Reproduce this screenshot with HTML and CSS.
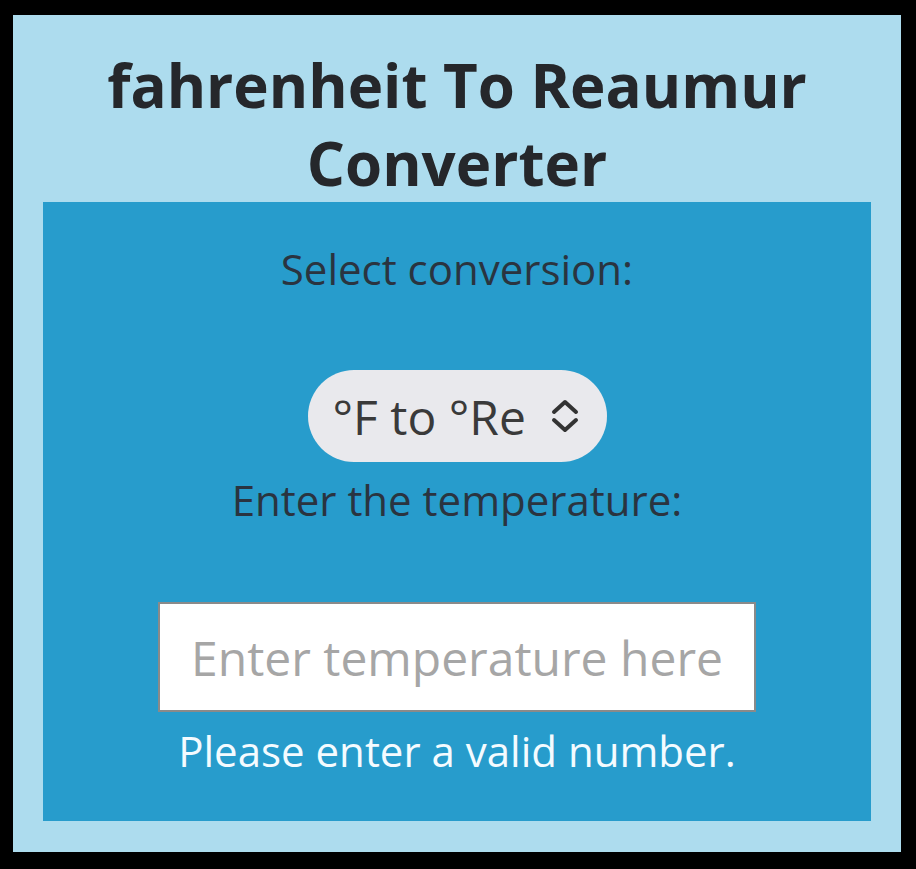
FILE: index.html
```html
<!DOCTYPE html>
<html>
	<head>
		<link rel="stylesheet" href="styles.css">
		<title>fahrenheit To Reaumur Converter</title>
	</head>
	<body>
		<div class="container">
			<h1 class="title">fahrenheit To Reaumur Converter</h1>
			<div class="converter">
				<label class="label" for="conversion">Select conversion:</label>
				<div class="select-wrap">
					<select id="conversion" class="select">
						<option>°F to °Re</option>
						<option>°Re to °F</option>
					</select>
					<svg class="select-arrows" width="32" height="36" viewBox="0 0 32 36">
						<path d="M5 14 L16 4 L27 14" fill="none" stroke="#333" stroke-width="4" stroke-linecap="round" stroke-linejoin="round"/>
						<path d="M5 22 L16 32 L27 22" fill="none" stroke="#333" stroke-width="4" stroke-linecap="round" stroke-linejoin="round"/>
					</svg>
				</div>
				<label class="label" for="temperature">Enter the temperature:</label>
				<input id="temperature" class="input" type="text" placeholder="Enter temperature here">
				<div class="error">Please enter a valid number.</div>
			</div>
		</div>
	</body>
</html>
```

FILE: styles.css
```css
body {
	margin: 0;
	background-color: #000;
	font-family: "Open Sans", "Noto Sans", sans-serif;
}
.container {
	margin: 15px 15px 0 13px;
	padding: 31px 30px 31px 30px;
	background-color: #addcee;
	text-align: center;
}
.title {
	margin: 0;
	font-size: 60px;
	line-height: 78px;
	font-weight: 700;
	color: #25272b;
}
.converter {
	display: flex;
	flex-direction: column;
	align-items: center;
	padding: 38px 20px 42px 20px;
	background-color: #279ccc;
}
.label {
	display: block;
	font-size: 42px;
	line-height: 57px;
	color: #2a3440;
}
.select-wrap {
	position: relative;
	margin: 73px 0 9px 0;
}
.select {
	display: block;
	appearance: none;
	-webkit-appearance: none;
	width: 299px;
	height: 92px;
	padding: 0 0 0 25px;
	border: none;
	border-radius: 46px;
	background-color: #e9e9ed;
	font-family: "Open Sans", sans-serif;
	font-size: 48px;
	color: #3a3a3a;
}
.select-arrows {
	position: absolute;
	right: 26px;
	top: 28px;
	pointer-events: none;
}
.input {
	display: block;
	box-sizing: border-box;
	width: 598px;
	height: 110px;
	margin: 74px 0 10px 0;
	padding: 0 20px;
	border: 2px solid #8a8a8a;
	background-color: #fff;
	font-family: "Open Sans", sans-serif;
	font-size: 48px;
	text-align: center;
}
.input::placeholder {
	color: #a6a6a6;
}
.error {
	font-size: 42px;
	line-height: 57px;
	color: #f4fbff;
}
```
